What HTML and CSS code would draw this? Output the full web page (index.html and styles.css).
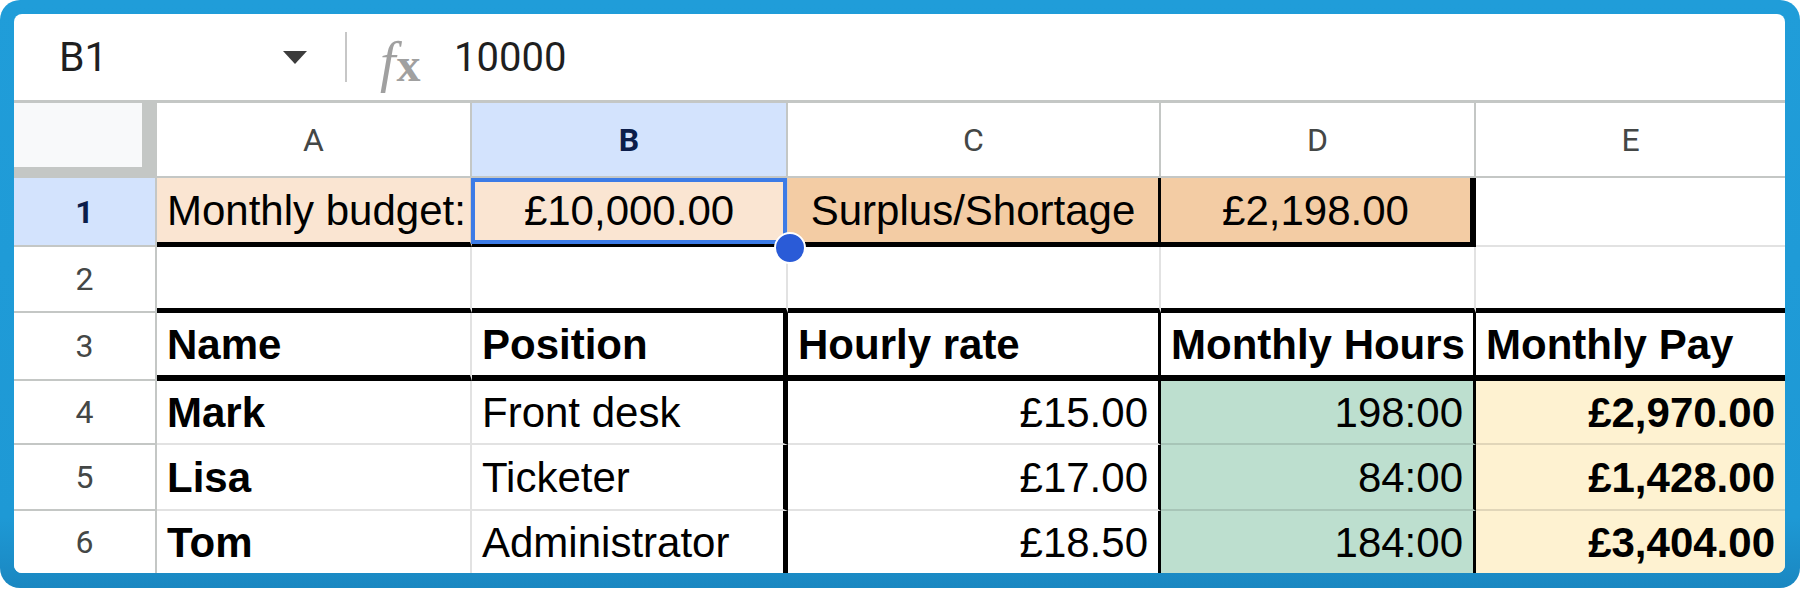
FILE: index.html
```html
<!DOCTYPE html>
<html lang="en">
<head>
<meta charset="utf-8">
<title>Sheet</title>
<link rel="stylesheet" href="styles.css">
</head>
<body>
<div class="frame">
  <div class="sheet">
    <div class="fbar">
      <div class="namebox"><span class="ref">B1</span><span class="caret"></span></div>
      <div class="sep"></div>
      <div class="fx"><i>f</i><b>x</b></div>
      <div class="value">10000</div>
    </div>
    <div class="grid">
      <div class="corner"></div>
      <div class="ch">A</div>
      <div class="ch selh">B</div>
      <div class="ch">C</div>
      <div class="ch">D</div>
      <div class="ch last">E</div>

      <div class="rh selh">1</div>
      <div class="c peach bb5">Monthly budget:</div>
      <div class="c peach bb5 center sel">£10,000.00</div>
      <div class="c orange bb5 br3 center">Surplus/Shortage</div>
      <div class="c orange bb5 br6 center">£2,198.00</div>
      <div class="c last"></div>

      <div class="rh">2</div>
      <div class="c bb5"></div>
      <div class="c bb5"></div>
      <div class="c bb5"></div>
      <div class="c bb5"></div>
      <div class="c bb5 last"></div>

      <div class="rh">3</div>
      <div class="c bb6 bold">Name</div>
      <div class="c bb6 br5 bold">Position</div>
      <div class="c bb6 br3 bold">Hourly rate</div>
      <div class="c bb6 br3 bold tight">Monthly Hours</div>
      <div class="c bb6 last bold">Monthly Pay</div>

      <div class="rh">4</div>
      <div class="c bold">Mark</div>
      <div class="c br5">Front desk</div>
      <div class="c br3 right">£15.00</div>
      <div class="c br3 green right">198:00</div>
      <div class="c yellow right bold last">£2,970.00</div>

      <div class="rh">5</div>
      <div class="c bold">Lisa</div>
      <div class="c br5">Ticketer</div>
      <div class="c br3 right">£17.00</div>
      <div class="c br3 green right">84:00</div>
      <div class="c yellow right bold last">£1,428.00</div>

      <div class="rh nobb">6</div>
      <div class="c bold nobb">Tom</div>
      <div class="c br5 nobb">Administrator</div>
      <div class="c br3 right nobb">£18.50</div>
      <div class="c br3 green right nobb">184:00</div>
      <div class="c yellow right bold last nobb">£3,404.00</div>
    </div>
  </div>
</div>
</body>
</html>
```

FILE: styles.css
```css
* { box-sizing: border-box; }
html, body { margin: 0; padding: 0; background: #ffffff; }
body { width: 1800px; height: 593px; overflow: hidden; }

.frame {
  width: 1800px;
  height: 588px;
  padding: 14px 15px 15px 14px;
  border-radius: 20px;
  background: linear-gradient(to bottom, #209dd9 0%, #1e99d5 88%, #1a87c1 100%);
}

.sheet {
  height: 559px;
  background: #ffffff;
  border-radius: 8px;
  overflow: hidden;
  display: flex;
  flex-direction: column;
}

/* formula bar */
.fbar {
  flex: none;
  height: 89px;
  border-bottom: 3px solid #c4c7c5;
  display: flex;
  align-items: center;
  font-family: Roboto, "Liberation Sans", Arial, sans-serif;
  font-size: 40px;
  color: #1f1f1f;
}
.namebox {
  width: 317px;
  display: flex;
  align-items: center;
  justify-content: space-between;
  padding: 0 24px 0 45px;
  font-size: 41px;
}
.caret {
  width: 0;
  height: 0;
  border-left: 12.5px solid transparent;
  border-right: 12.5px solid transparent;
  border-top: 13px solid #3c3c3c;
}
.sep {
  width: 2px;
  height: 50px;
  background: #c7c7c7;
  margin-left: 14px;
}
.fx {
  margin-left: 33px;
  width: 48px;
  color: #a0a0a0;
  font-family: "Liberation Serif", "DejaVu Serif", serif;
  line-height: 1;
  padding-top: 10px;
  white-space: nowrap;
  display: flex;
  align-items: baseline;
}
.fx i { font-size: 56px; font-weight: normal; font-style: italic; }
.fx b { font-size: 48px; font-weight: bold; margin-left: 1px; }
.value { margin-left: 26px; }

/* grid */
.grid {
  display: grid;
  grid-template-columns: 143px 315px 316px 373px 315px 309px;
  grid-template-rows: 75px 69px 66px 68px 64px 66px 62px;
}

.corner {
  background: #f8f9fa;
  border-right: 15px solid #c4c7c5;
  border-bottom: 11px solid #c4c7c5;
}

.ch, .rh {
  display: flex;
  align-items: center;
  justify-content: center;
  font-family: Roboto, "Liberation Sans", Arial, sans-serif;
  font-size: 32px;
  color: #444746;
  background: #ffffff;
  border-right: 2px solid #c4c7c5;
  border-bottom: 2px solid #c4c7c5;
}
.selh {
  background: #d3e3fd;
  color: #0b1d4a;
  font-weight: bold;
}

.c {
  display: flex;
  align-items: center;
  padding: 2px 10px 0 10px;
  font-family: "Liberation Sans", Arial, Helvetica, sans-serif;
  font-size: 42px;
  color: #000000;
  white-space: nowrap;
  border-right: 2px solid rgba(0, 0, 0, 0.115);
  border-bottom: 2px solid rgba(0, 0, 0, 0.115);
}

.center { justify-content: center; }
.right { justify-content: flex-end; }
.bold { font-weight: bold; }
.tight { padding-left: 10px; padding-right: 0; }

.peach { background: #fae5d2; }
.orange { background: #f3cca4; }
.green { background: #bddfcf; }
.yellow { background: #fef2d1; }

.bb5 { border-bottom: 5px solid #000000; }
.bb6 { border-bottom: 6px solid #000000; }
.br3 { border-right: 3px solid #000000; }
.br5 { border-right: 5px solid #000000; }
.br6 { border-right: 6px solid #000000; }
.last { border-right: 0; }
.nobb { border-bottom: 0; }

/* active cell selection */
.sel { position: relative; z-index: 3; }
.sel::before {
  content: "";
  position: absolute;
  left: -1px;
  top: 0;
  right: -1px;
  bottom: -2px;
  border: 4px solid #3c7be6;
}
.sel::after {
  content: "";
  position: absolute;
  left: 302px;
  top: 54px;
  width: 28px;
  height: 28px;
  border-radius: 50%;
  background: #2a5bd7;
  border: 2px solid #ffffff;
}
```
